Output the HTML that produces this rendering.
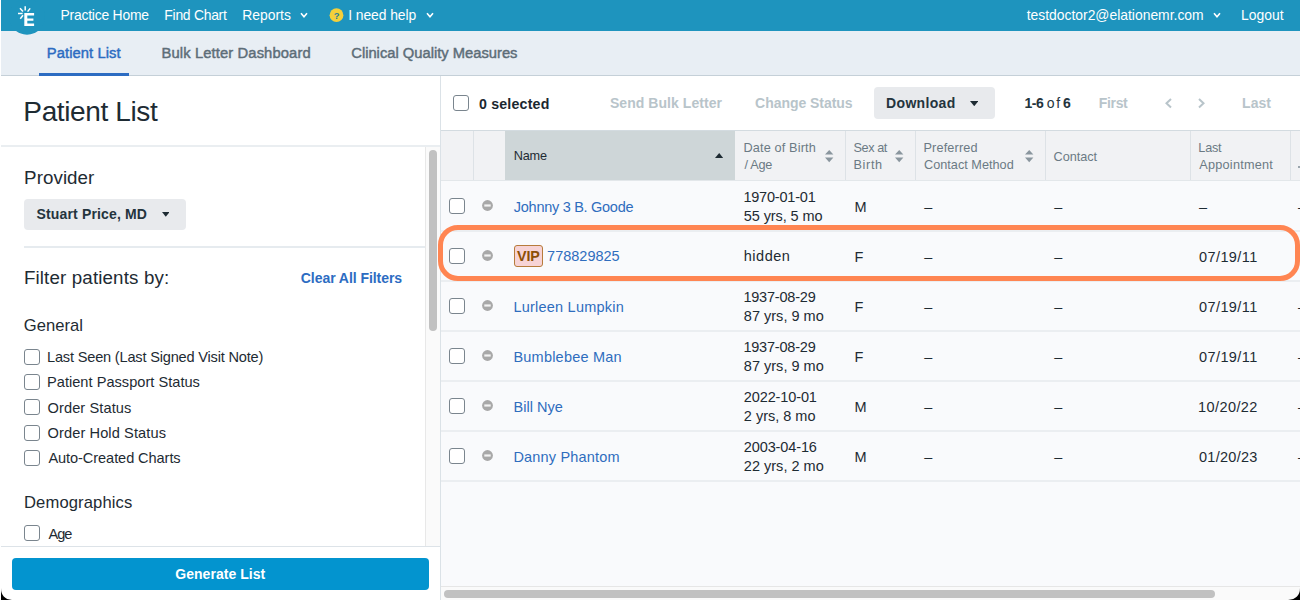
<!DOCTYPE html>
<html><head><meta charset="utf-8">
<style>
*{box-sizing:border-box;margin:0;padding:0}
html,body{width:1300px;height:600px;overflow:hidden;background:#fff;font-family:"Liberation Sans",sans-serif;position:relative}
.a{position:absolute;white-space:nowrap;line-height:1}
b{font-weight:700}
</style></head><body>
<div style="position:absolute;left:1px;top:0;width:1299px;height:31px;background:#1e94be"></div>
<svg style="position:absolute;left:0;top:0" width="60" height="40" viewBox="0 0 60 40">
<circle cx="27" cy="16.7" r="18" fill="#1e94be"/>
<g stroke="#fff" stroke-width="1.5" stroke-linecap="butt">
<line x1="25.2" y1="6.3" x2="25.2" y2="10.6"/>
<line x1="27.6" y1="11.6" x2="30.2" y2="8.4"/>
<line x1="20" y1="8.3" x2="23" y2="11.6"/>
<line x1="18" y1="13.5" x2="22.6" y2="13.5"/>
<line x1="20.3" y1="18.7" x2="23" y2="15.3"/>
</g>
<path d="M24.3 13 H34.1 V15.4 H27.3 V18.4 H33.4 V20.8 H27.3 V23.6 H34.1 V26 H24.3 Z" fill="#fff"/>
</svg>
<span id="t0" class="a" style="left:60.48px;top:9.01px;font-size:13.90px;font-weight:400;color:#ffffff;letter-spacing:-0.210px;">Practice Home</span>
<span id="t1" class="a" style="left:164.34px;top:9.01px;font-size:13.90px;font-weight:400;color:#ffffff;letter-spacing:-0.260px;">Find Chart</span>
<span id="t2" class="a" style="left:242.25px;top:9.01px;font-size:13.90px;font-weight:400;color:#ffffff;letter-spacing:0.000px;">Reports</span>
<svg style="position:absolute;left:298.0px;top:8.7px" width="12" height="12"><path d="M3.0 4.2 L6.0 7.8 L9.0 4.2" fill="none" stroke="#fff" stroke-width="1.6"/></svg>
<svg style="position:absolute;left:329px;top:8px" width="15" height="15" viewBox="0 0 15 15"><circle cx="7.5" cy="7.2" r="6.9" fill="#f4d03a"/>
<text x="7.6" y="10.9" font-family="Liberation Sans" font-weight="bold" font-size="9.5" text-anchor="middle" fill="#2b7e9a">?</text></svg>
<span id="t3" class="a" style="left:348.22px;top:9.01px;font-size:13.90px;font-weight:400;color:#ffffff;letter-spacing:-0.072px;">I need help</span>
<svg style="position:absolute;left:423.5px;top:8.7px" width="12" height="12"><path d="M3.0 4.2 L6.0 7.8 L9.0 4.2" fill="none" stroke="#fff" stroke-width="1.6"/></svg>
<span id="t4" class="a" style="left:1026.65px;top:9.01px;font-size:13.90px;font-weight:400;color:#ffffff;letter-spacing:0.000px;">testdoctor2@elationemr.com</span>
<svg style="position:absolute;left:1211.0px;top:8.7px" width="12" height="12"><path d="M3.0 4.2 L6.0 7.8 L9.0 4.2" fill="none" stroke="#fff" stroke-width="1.6"/></svg>
<span id="t5" class="a" style="left:1241.10px;top:9.01px;font-size:13.90px;font-weight:400;color:#ffffff;letter-spacing:-0.000px;">Logout</span>
<div style="position:absolute;left:1px;top:31px;width:1299px;height:44px;background:#e8eef4"></div>
<div style="position:absolute;left:1px;top:75px;width:1299px;height:1px;background:#c5d0d8"></div>
<svg style="position:absolute;left:0;top:31px" width="60" height="6" viewBox="0 31 60 6"><circle cx="27" cy="16.7" r="18" fill="#1e94be"/></svg>
<span id="t6" class="a" style="left:46.80px;top:45.51px;font-size:14.75px;font-weight:400;color:#2c6cc2;letter-spacing:0.082px;-webkit-text-stroke:0.45px #2c6cc2;">Patient List</span>
<div style="position:absolute;left:39px;top:73px;width:90px;height:3px;background:#2c6cc2"></div>
<span id="t7" class="a" style="left:161.54px;top:45.51px;font-size:14.75px;font-weight:400;color:#5d6d78;letter-spacing:0.117px;-webkit-text-stroke:0.45px #5d6d78;">Bulk Letter Dashboard</span>
<span id="t8" class="a" style="left:351.24px;top:45.51px;font-size:14.75px;font-weight:400;color:#5d6d78;letter-spacing:-0.008px;-webkit-text-stroke:0.45px #5d6d78;">Clinical Quality Measures</span>
<span id="t9" class="a" style="left:23.32px;top:98.21px;font-size:28.05px;font-weight:400;color:#1e2b33;letter-spacing:-0.393px;">Patient List</span>
<div style="position:absolute;left:1px;top:145px;width:439px;height:2px;background:#eaeef1"></div>
<div style="position:absolute;left:425px;top:147px;width:15px;height:399px;background:#fafafa;border-left:1px solid #e8e8e8"></div>
<div style="position:absolute;left:429px;top:149.5px;width:8px;height:181.5px;background:#c1c1c1;border-radius:4px"></div>
<span id="t10" class="a" style="left:24.09px;top:168.71px;font-size:18.75px;font-weight:400;color:#1e2b33;letter-spacing:0.064px;">Provider</span>
<div style="position:absolute;left:24px;top:199px;width:162px;height:31px;background:#e8eaed;border-radius:4px"></div>
<span id="t11" class="a" style="left:36.54px;top:207.21px;font-size:14.00px;font-weight:700;color:#24343d;letter-spacing:0.150px;">Stuart Price, MD</span>
<svg style="position:absolute;left:161.8px;top:212.3px" width="7.6" height="4.7" viewBox="0 0 7.6 4.7"><path d="M0 0 L7.6 0 L3.8 4.7 Z" fill="#1e2b33"/></svg>
<div style="position:absolute;left:24px;top:246px;width:401px;height:2px;background:#e6ebef"></div>
<span id="t12" class="a" style="left:23.90px;top:269.32px;font-size:18.75px;font-weight:400;color:#1e2b33;letter-spacing:0.140px;">Filter patients by:</span>
<span id="t13" class="a" style="left:300.80px;top:271.01px;font-size:14.00px;font-weight:700;color:#2c6cc2;letter-spacing:-0.056px;">Clear All Filters</span>
<span id="t14" class="a" style="left:23.80px;top:318.01px;font-size:16.60px;font-weight:400;color:#1e2b33;letter-spacing:0.000px;">General</span>
<div style="position:absolute;left:24.0px;top:348.5px;width:16px;height:16px;border:1.2px solid #7a858e;border-radius:3px;background:#fff"></div>
<span id="t15" class="a" style="left:47.04px;top:350.11px;font-size:14.60px;font-weight:400;color:#1e2b33;letter-spacing:-0.196px;">Last Seen (Last Signed Visit Note)</span>
<div style="position:absolute;left:24.0px;top:373.8px;width:16px;height:16px;border:1.2px solid #7a858e;border-radius:3px;background:#fff"></div>
<span id="t16" class="a" style="left:47.04px;top:375.44px;font-size:14.60px;font-weight:400;color:#1e2b33;letter-spacing:0.016px;">Patient Passport Status</span>
<div style="position:absolute;left:24.0px;top:399.2px;width:16px;height:16px;border:1.2px solid #7a858e;border-radius:3px;background:#fff"></div>
<span id="t17" class="a" style="left:47.54px;top:400.77px;font-size:14.60px;font-weight:400;color:#1e2b33;letter-spacing:0.098px;">Order Status</span>
<div style="position:absolute;left:24.0px;top:424.5px;width:16px;height:16px;border:1.2px solid #7a858e;border-radius:3px;background:#fff"></div>
<span id="t18" class="a" style="left:47.54px;top:426.09px;font-size:14.60px;font-weight:400;color:#1e2b33;letter-spacing:0.101px;">Order Hold Status</span>
<div style="position:absolute;left:24.0px;top:449.8px;width:16px;height:16px;border:1.2px solid #7a858e;border-radius:3px;background:#fff"></div>
<span id="t19" class="a" style="left:48.44px;top:451.44px;font-size:14.60px;font-weight:400;color:#1e2b33;letter-spacing:-0.090px;">Auto-Created Charts</span>
<span id="t20" class="a" style="left:24.00px;top:495.01px;font-size:16.60px;font-weight:400;color:#1e2b33;letter-spacing:0.115px;">Demographics</span>
<div style="position:absolute;left:24.0px;top:525.0px;width:16px;height:16px;border:1.2px solid #7a858e;border-radius:3px;background:#fff"></div>
<span id="t21" class="a" style="left:48.44px;top:526.70px;font-size:14.60px;font-weight:400;color:#1e2b33;letter-spacing:-0.990px;">Age</span>
<div style="position:absolute;left:1px;top:546px;width:439px;height:54px;background:#fff;border-top:1px solid #dde3e8"></div>
<div style="position:absolute;left:12px;top:558px;width:417px;height:32px;background:#0394cf;border-radius:4px"></div>
<span id="t22" class="a" style="left:175.24px;top:567.01px;font-size:14.00px;font-weight:700;color:#fff;letter-spacing:0.037px;">Generate List</span>
<div style="position:absolute;left:440px;top:76px;width:860px;height:524px;background:#f9fafc"></div>
<div style="position:absolute;left:441px;top:76px;width:859px;height:54px;background:#fff"></div>
<div style="position:absolute;left:440px;top:76px;width:1px;height:524px;background:#dbe2e7"></div>
<div style="position:absolute;left:453.0px;top:95.0px;width:16px;height:16px;border:1.2px solid #7a858e;border-radius:3px;background:#fff"></div>
<span id="t23" class="a" style="left:478.95px;top:96.76px;font-size:14.20px;font-weight:700;color:#1b2730;letter-spacing:0.200px;">0 selected</span>
<span id="t24" class="a" style="left:609.92px;top:96.01px;font-size:14.00px;font-weight:700;color:#b8c4ca;letter-spacing:0.060px;">Send Bulk Letter</span>
<span id="t25" class="a" style="left:755.10px;top:96.01px;font-size:14.00px;font-weight:700;color:#b8c4ca;letter-spacing:-0.038px;">Change Status</span>
<div style="position:absolute;left:873.5px;top:87px;width:121.5px;height:31.5px;background:#e8eaed;border-radius:4px"></div>
<span id="t26" class="a" style="left:886.10px;top:95.60px;font-size:14.00px;font-weight:700;color:#24343d;letter-spacing:0.321px;">Download</span>
<svg style="position:absolute;left:970.0px;top:100.8px" width="8.4" height="5.2" viewBox="0 0 8.4 5.2"><path d="M0 0 L8.4 0 L4.2 5.2 Z" fill="#1e2b33"/></svg>
<span id="t27" class="a" style="left:1024.40px;top:96.10px;font-size:14.00px;font-weight:700;color:#24343d;letter-spacing:-0.360px;">1-6</span>
<span id="t28" class="a" style="left:1046.80px;top:96.10px;font-size:14.00px;font-weight:400;color:#24343d;letter-spacing:1.620px;">of</span>
<span id="t29" class="a" style="left:1063.00px;top:96.10px;font-size:14.00px;font-weight:700;color:#24343d;letter-spacing:0.000px;">6</span>
<span id="t30" class="a" style="left:1098.80px;top:95.81px;font-size:14.00px;font-weight:700;color:#b8c4ca;letter-spacing:-0.337px;">First</span>
<svg style="position:absolute;left:1164.6px;top:98.3px" width="7" height="11" viewBox="0 0 7 11"><path d="M6 1 L1.5 5.2 L6 9.4" fill="none" stroke="#b8c4ca" stroke-width="2"/></svg>
<svg style="position:absolute;left:1198.3px;top:98.3px" width="7" height="11" viewBox="0 0 7 11"><path d="M1 1 L5.5 5.2 L1 9.4" fill="none" stroke="#b8c4ca" stroke-width="2"/></svg>
<span id="t31" class="a" style="left:1242.10px;top:95.81px;font-size:14.00px;font-weight:700;color:#b8c4ca;letter-spacing:0.000px;">Last</span>
<div style="position:absolute;left:441px;top:130px;width:859px;height:50px;background:#f1f2f4;border-top:1px solid #d3dbe0"></div>
<div style="position:absolute;left:441px;top:180px;width:859px;height:1px;background:#e3e7ea"></div>
<div style="position:absolute;left:505px;top:131px;width:230px;height:49px;background:#ced6d8"></div>
<div style="position:absolute;left:473.0px;top:131px;width:1px;height:49px;background:#dde2e6"></div>
<div style="position:absolute;left:845.0px;top:131px;width:1px;height:49px;background:#dde2e6"></div>
<div style="position:absolute;left:915.0px;top:131px;width:1px;height:49px;background:#dde2e6"></div>
<div style="position:absolute;left:1045.0px;top:131px;width:1px;height:49px;background:#dde2e6"></div>
<div style="position:absolute;left:1190.0px;top:131px;width:1px;height:49px;background:#dde2e6"></div>
<div style="position:absolute;left:1290.0px;top:131px;width:1px;height:49px;background:#dde2e6"></div>
<span id="t32" class="a" style="left:513.72px;top:150.41px;font-size:12.70px;font-weight:400;color:#1e2b33;letter-spacing:-0.180px;">Name</span>
<svg style="position:absolute;left:714.6px;top:153.2px" width="8.3" height="5.0" viewBox="0 0 8.3 5.0"><path d="M0 5.0 L4.2 0 L8.3 5.0 Z" fill="#1e2b33"/></svg>
<span id="t33" class="a" style="left:743.48px;top:142.00px;font-size:12.70px;font-weight:400;color:#6b7a84;letter-spacing:0.150px;">Date of Birth</span>
<span id="t34" class="a" style="left:744.38px;top:158.50px;font-size:12.70px;font-weight:400;color:#6b7a84;letter-spacing:-0.270px;">/ Age</span>
<svg style="position:absolute;left:824.6px;top:150px" width="9" height="13" viewBox="0 0 9 13"><path d="M0 4.6 L4.2 0 L8.4 4.6 Z M0 7.4 L8.4 7.4 L4.2 12.3 Z" fill="#8a969e"/></svg>
<span id="t35" class="a" style="left:853.54px;top:142.00px;font-size:12.70px;font-weight:400;color:#6b7a84;letter-spacing:-0.432px;">Sex at</span>
<span id="t36" class="a" style="left:853.54px;top:158.50px;font-size:12.70px;font-weight:400;color:#6b7a84;letter-spacing:0.630px;">Birth</span>
<svg style="position:absolute;left:894.6px;top:150px" width="9" height="13" viewBox="0 0 9 13"><path d="M0 4.6 L4.2 0 L8.4 4.6 Z M0 7.4 L8.4 7.4 L4.2 12.3 Z" fill="#8a969e"/></svg>
<span id="t37" class="a" style="left:923.48px;top:142.00px;font-size:12.70px;font-weight:400;color:#6b7a84;letter-spacing:0.158px;">Preferred</span>
<span id="t38" class="a" style="left:923.98px;top:158.50px;font-size:12.70px;font-weight:400;color:#6b7a84;letter-spacing:0.014px;">Contact Method</span>
<svg style="position:absolute;left:1024.6px;top:150px" width="9" height="13" viewBox="0 0 9 13"><path d="M0 4.6 L4.2 0 L8.4 4.6 Z M0 7.4 L8.4 7.4 L4.2 12.3 Z" fill="#8a969e"/></svg>
<span id="t39" class="a" style="left:1053.54px;top:150.81px;font-size:12.70px;font-weight:400;color:#6b7a84;letter-spacing:-0.030px;">Contact</span>
<span id="t40" class="a" style="left:1198.36px;top:142.00px;font-size:12.70px;font-weight:400;color:#6b7a84;letter-spacing:-0.240px;">Last</span>
<span id="t41" class="a" style="left:1199.36px;top:158.50px;font-size:12.70px;font-weight:400;color:#6b7a84;letter-spacing:0.216px;">Appointment</span>
<div style="position:absolute;left:441px;top:230px;width:859px;height:2px;background:#ebeef1"></div>
<div style="position:absolute;left:449.0px;top:198.0px;width:16px;height:16px;border:1.2px solid #7a858e;border-radius:3px;background:#fff"></div>
<svg style="position:absolute;left:482px;top:200.0px" width="11" height="11" viewBox="0 0 11 11"><circle cx="5.5" cy="5.5" r="5.4" fill="#a8a8a8"/><rect x="2.3" y="4.4" width="6.4" height="2.2" fill="#f2f2f2"/></svg>
<span id="t42" class="a" style="left:513.86px;top:199.51px;font-size:14.50px;font-weight:400;color:#2f6dbe;letter-spacing:-0.281px;">Johnny 3 B. Goode</span>
<span id="t43" class="a" style="left:743.40px;top:189.51px;font-size:14.50px;font-weight:400;color:#1e2b33;letter-spacing:-0.200px;">1970-01-01</span>
<span id="t44" class="a" style="left:743.80px;top:208.80px;font-size:14.50px;font-weight:400;color:#1e2b33;letter-spacing:-0.098px;">55 yrs, 5 mo</span>
<span id="t45" class="a" style="left:854.50px;top:199.51px;font-size:14.50px;font-weight:400;color:#1e2b33;letter-spacing:0.000px;">M</span>
<span id="t46" class="a" style="left:924.26px;top:199.51px;font-size:14.50px;font-weight:400;color:#1e2b33;letter-spacing:0.000px;">–</span>
<span id="t47" class="a" style="left:1054.26px;top:199.51px;font-size:14.50px;font-weight:400;color:#1e2b33;letter-spacing:0.000px;">–</span>
<span id="t48" class="a" style="left:1199.00px;top:199.51px;font-size:14.50px;font-weight:400;color:#1e2b33;letter-spacing:0.000px;">–</span>
<span id="t49" class="a" style="left:1298.00px;top:199.51px;font-size:14.50px;font-weight:400;color:#1e2b33;letter-spacing:0.000px;">–</span>
<div style="position:absolute;left:441px;top:280px;width:859px;height:2px;background:#ebeef1"></div>
<div style="position:absolute;left:449.0px;top:248.0px;width:16px;height:16px;border:1.2px solid #7a858e;border-radius:3px;background:#fff"></div>
<svg style="position:absolute;left:482px;top:250.0px" width="11" height="11" viewBox="0 0 11 11"><circle cx="5.5" cy="5.5" r="5.4" fill="#a8a8a8"/><rect x="2.3" y="4.4" width="6.4" height="2.2" fill="#f2f2f2"/></svg>
<div style="position:absolute;left:514.2px;top:245.3px;width:28.5px;height:21.5px;background:#f7d3d5;border:1.2px solid #b77b3b;border-radius:3px"></div>
<span id="t50" class="a" style="left:517.00px;top:249.21px;font-size:14.30px;font-weight:700;color:#8c4e06;letter-spacing:-0.090px;">VIP</span>
<span id="t51" class="a" style="left:547.10px;top:248.51px;font-size:14.50px;font-weight:400;color:#2f6dbe;letter-spacing:0.000px;">778829825</span>
<span id="t52" class="a" style="left:743.80px;top:249.21px;font-size:14.50px;font-weight:400;color:#1e2b33;letter-spacing:0.504px;">hidden</span>
<span id="t53" class="a" style="left:854.50px;top:249.51px;font-size:14.50px;font-weight:400;color:#1e2b33;letter-spacing:0.000px;">F</span>
<span id="t54" class="a" style="left:924.26px;top:249.51px;font-size:14.50px;font-weight:400;color:#1e2b33;letter-spacing:0.000px;">–</span>
<span id="t55" class="a" style="left:1054.26px;top:249.51px;font-size:14.50px;font-weight:400;color:#1e2b33;letter-spacing:0.000px;">–</span>
<span id="t56" class="a" style="left:1199.00px;top:249.51px;font-size:14.50px;font-weight:400;color:#1e2b33;letter-spacing:0.411px;">07/19/11</span>
<span id="t57" class="a" style="left:1296.10px;top:249.51px;font-size:14.50px;font-weight:400;color:#1e2b33;letter-spacing:0.000px;">–</span>
<div style="position:absolute;left:441px;top:330px;width:859px;height:2px;background:#ebeef1"></div>
<div style="position:absolute;left:449.0px;top:298.0px;width:16px;height:16px;border:1.2px solid #7a858e;border-radius:3px;background:#fff"></div>
<svg style="position:absolute;left:482px;top:300.0px" width="11" height="11" viewBox="0 0 11 11"><circle cx="5.5" cy="5.5" r="5.4" fill="#a8a8a8"/><rect x="2.3" y="4.4" width="6.4" height="2.2" fill="#f2f2f2"/></svg>
<span id="t58" class="a" style="left:513.46px;top:299.51px;font-size:14.50px;font-weight:400;color:#2f6dbe;letter-spacing:0.219px;">Lurleen Lumpkin</span>
<span id="t59" class="a" style="left:743.40px;top:289.51px;font-size:14.50px;font-weight:400;color:#1e2b33;letter-spacing:-0.200px;">1937-08-29</span>
<span id="t60" class="a" style="left:743.80px;top:308.80px;font-size:14.50px;font-weight:400;color:#1e2b33;letter-spacing:0.016px;">87 yrs, 9 mo</span>
<span id="t61" class="a" style="left:854.50px;top:299.51px;font-size:14.50px;font-weight:400;color:#1e2b33;letter-spacing:0.000px;">F</span>
<span id="t62" class="a" style="left:924.26px;top:299.51px;font-size:14.50px;font-weight:400;color:#1e2b33;letter-spacing:0.000px;">–</span>
<span id="t63" class="a" style="left:1054.26px;top:299.51px;font-size:14.50px;font-weight:400;color:#1e2b33;letter-spacing:0.000px;">–</span>
<span id="t64" class="a" style="left:1199.00px;top:299.51px;font-size:14.50px;font-weight:400;color:#1e2b33;letter-spacing:0.411px;">07/19/11</span>
<span id="t65" class="a" style="left:1298.00px;top:299.51px;font-size:14.50px;font-weight:400;color:#1e2b33;letter-spacing:0.000px;">–</span>
<div style="position:absolute;left:441px;top:380px;width:859px;height:2px;background:#ebeef1"></div>
<div style="position:absolute;left:449.0px;top:348.0px;width:16px;height:16px;border:1.2px solid #7a858e;border-radius:3px;background:#fff"></div>
<svg style="position:absolute;left:482px;top:350.0px" width="11" height="11" viewBox="0 0 11 11"><circle cx="5.5" cy="5.5" r="5.4" fill="#a8a8a8"/><rect x="2.3" y="4.4" width="6.4" height="2.2" fill="#f2f2f2"/></svg>
<span id="t66" class="a" style="left:513.46px;top:349.51px;font-size:14.50px;font-weight:400;color:#2f6dbe;letter-spacing:0.210px;">Bumblebee Man</span>
<span id="t67" class="a" style="left:743.40px;top:339.51px;font-size:14.50px;font-weight:400;color:#1e2b33;letter-spacing:-0.200px;">1937-08-29</span>
<span id="t68" class="a" style="left:743.80px;top:358.80px;font-size:14.50px;font-weight:400;color:#1e2b33;letter-spacing:0.016px;">87 yrs, 9 mo</span>
<span id="t69" class="a" style="left:854.50px;top:349.51px;font-size:14.50px;font-weight:400;color:#1e2b33;letter-spacing:0.000px;">F</span>
<span id="t70" class="a" style="left:924.26px;top:349.51px;font-size:14.50px;font-weight:400;color:#1e2b33;letter-spacing:0.000px;">–</span>
<span id="t71" class="a" style="left:1054.26px;top:349.51px;font-size:14.50px;font-weight:400;color:#1e2b33;letter-spacing:0.000px;">–</span>
<span id="t72" class="a" style="left:1199.00px;top:349.51px;font-size:14.50px;font-weight:400;color:#1e2b33;letter-spacing:0.411px;">07/19/11</span>
<span id="t73" class="a" style="left:1298.00px;top:349.51px;font-size:14.50px;font-weight:400;color:#1e2b33;letter-spacing:0.000px;">–</span>
<div style="position:absolute;left:441px;top:430px;width:859px;height:2px;background:#ebeef1"></div>
<div style="position:absolute;left:449.0px;top:398.0px;width:16px;height:16px;border:1.2px solid #7a858e;border-radius:3px;background:#fff"></div>
<svg style="position:absolute;left:482px;top:400.0px" width="11" height="11" viewBox="0 0 11 11"><circle cx="5.5" cy="5.5" r="5.4" fill="#a8a8a8"/><rect x="2.3" y="4.4" width="6.4" height="2.2" fill="#f2f2f2"/></svg>
<span id="t74" class="a" style="left:513.46px;top:399.51px;font-size:14.50px;font-weight:400;color:#2f6dbe;letter-spacing:0.026px;">Bill Nye</span>
<span id="t75" class="a" style="left:743.80px;top:389.51px;font-size:14.50px;font-weight:400;color:#1e2b33;letter-spacing:-0.120px;">2022-10-01</span>
<span id="t76" class="a" style="left:743.80px;top:408.80px;font-size:14.50px;font-weight:400;color:#1e2b33;letter-spacing:0.000px;">2 yrs, 8 mo</span>
<span id="t77" class="a" style="left:854.50px;top:399.51px;font-size:14.50px;font-weight:400;color:#1e2b33;letter-spacing:0.000px;">M</span>
<span id="t78" class="a" style="left:924.26px;top:399.51px;font-size:14.50px;font-weight:400;color:#1e2b33;letter-spacing:0.000px;">–</span>
<span id="t79" class="a" style="left:1054.26px;top:399.51px;font-size:14.50px;font-weight:400;color:#1e2b33;letter-spacing:0.000px;">–</span>
<span id="t80" class="a" style="left:1198.10px;top:399.51px;font-size:14.50px;font-weight:400;color:#1e2b33;letter-spacing:0.411px;">10/20/22</span>
<span id="t81" class="a" style="left:1298.00px;top:399.51px;font-size:14.50px;font-weight:400;color:#1e2b33;letter-spacing:0.000px;">–</span>
<div style="position:absolute;left:441px;top:480px;width:859px;height:2px;background:#ebeef1"></div>
<div style="position:absolute;left:449.0px;top:448.0px;width:16px;height:16px;border:1.2px solid #7a858e;border-radius:3px;background:#fff"></div>
<svg style="position:absolute;left:482px;top:450.0px" width="11" height="11" viewBox="0 0 11 11"><circle cx="5.5" cy="5.5" r="5.4" fill="#a8a8a8"/><rect x="2.3" y="4.4" width="6.4" height="2.2" fill="#f2f2f2"/></svg>
<span id="t82" class="a" style="left:513.46px;top:449.51px;font-size:14.50px;font-weight:400;color:#2f6dbe;letter-spacing:0.180px;">Danny Phantom</span>
<span id="t83" class="a" style="left:743.80px;top:439.51px;font-size:14.50px;font-weight:400;color:#1e2b33;letter-spacing:-0.120px;">2003-04-16</span>
<span id="t84" class="a" style="left:743.80px;top:458.80px;font-size:14.50px;font-weight:400;color:#1e2b33;letter-spacing:0.016px;">22 yrs, 2 mo</span>
<span id="t85" class="a" style="left:854.50px;top:449.51px;font-size:14.50px;font-weight:400;color:#1e2b33;letter-spacing:0.000px;">M</span>
<span id="t86" class="a" style="left:924.26px;top:449.51px;font-size:14.50px;font-weight:400;color:#1e2b33;letter-spacing:0.000px;">–</span>
<span id="t87" class="a" style="left:1054.26px;top:449.51px;font-size:14.50px;font-weight:400;color:#1e2b33;letter-spacing:0.000px;">–</span>
<span id="t88" class="a" style="left:1199.00px;top:449.51px;font-size:14.50px;font-weight:400;color:#1e2b33;letter-spacing:0.283px;">01/20/23</span>
<span id="t89" class="a" style="left:1298.00px;top:449.51px;font-size:14.50px;font-weight:400;color:#1e2b33;letter-spacing:0.000px;">–</span>
<div style="position:absolute;left:1298px;top:166px;width:2px;height:2px;background:#9aa5ad"></div>
<div style="position:absolute;left:438.4px;top:225px;width:861.2px;height:56.3px;border:5px solid #ff8552;border-radius:20px"></div>
<div style="position:absolute;left:441px;top:586px;width:859px;height:14px;background:#fafafa;border-top:1px solid #e6e6e6"></div>
<div style="position:absolute;left:444px;top:590px;width:771px;height:8px;background:#c1c1c1;border-radius:4px"></div>
<svg style="position:absolute;left:0;top:588px" width="14" height="12" viewBox="0 0 14 12"><path d="M1 0 Q1 11 12 12 L1 12 Z" fill="#000"/></svg>
<svg style="position:absolute;left:1286px;top:588px" width="14" height="12" viewBox="0 0 14 12"><path d="M14 0 Q14 11 2 12 L14 12 Z" fill="#000"/></svg>
</body></html>
